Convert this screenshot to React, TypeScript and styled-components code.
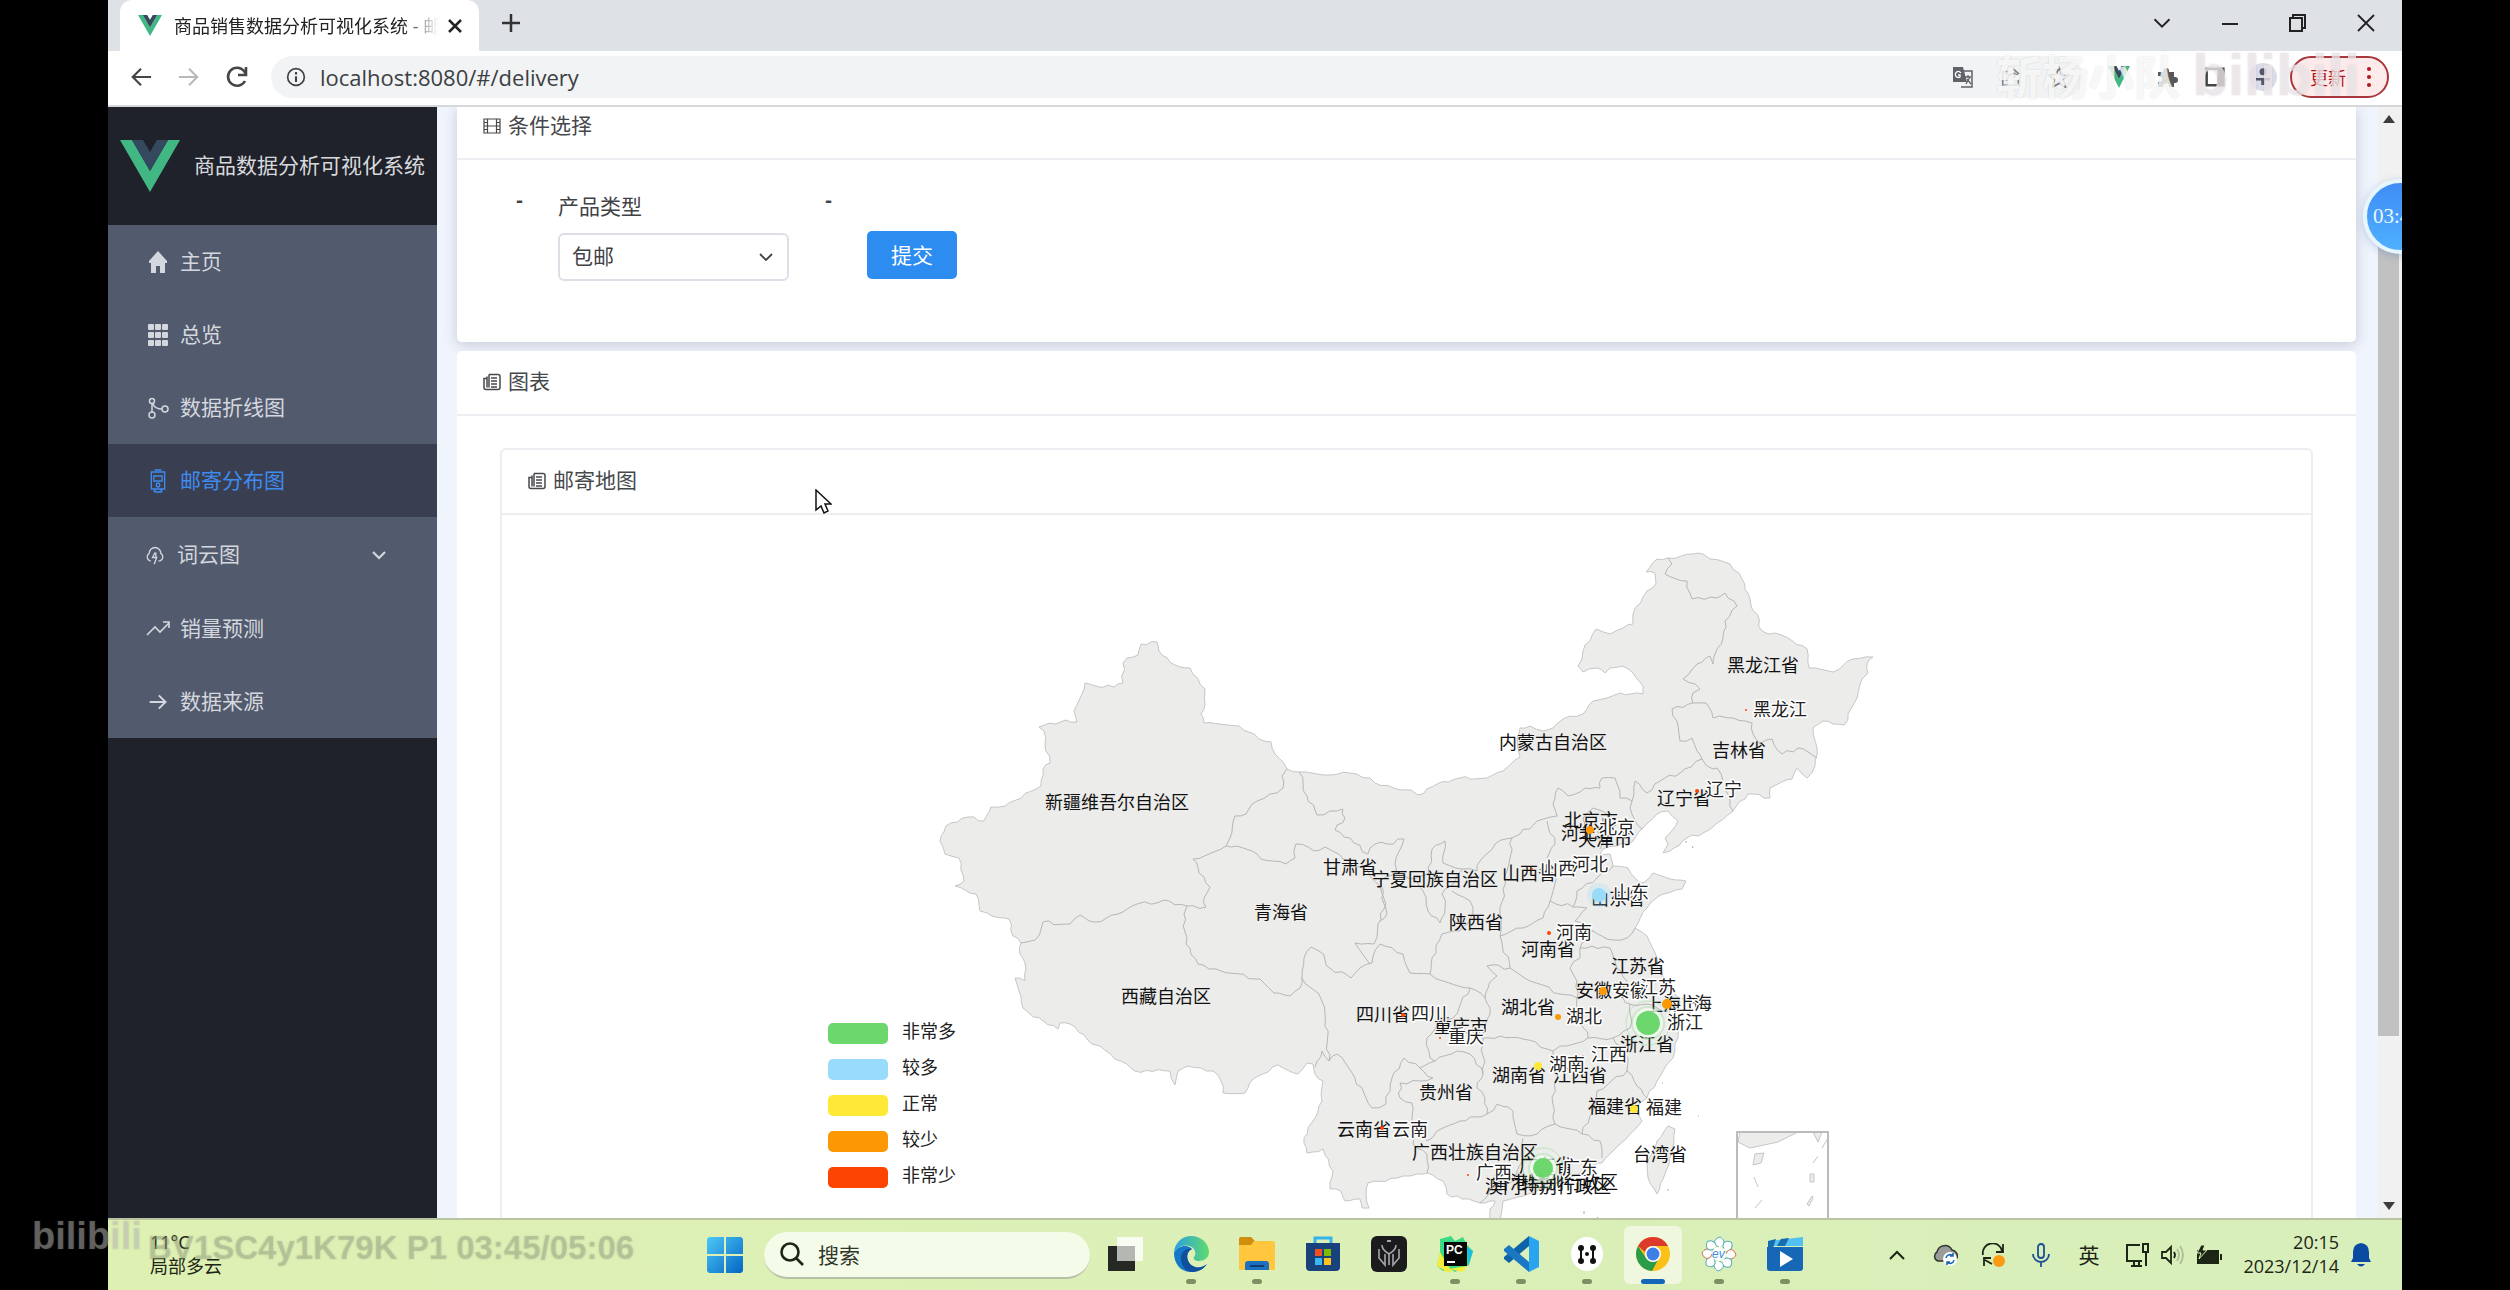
import React from "react";
import styled, { createGlobalStyle, css } from "styled-components";

const cjk = `"Noto Sans", "Noto Sans CJK SC", sans-serif`;
const han = `"Noto Sans CJK SC", sans-serif`;

const GlobalStyle = createGlobalStyle`
  *, *::before, *::after { box-sizing: border-box; }
  body { margin: 0; background: #000; font-family: ${han}; color: #404246; }
  button, select, input { font: inherit; color: inherit; }
  a { color: inherit; text-decoration: none; }
  svg { display: block; }
`;

/* ---------- frame ---------- */

const Stage = styled.div`
  position: relative;
  height: 100vh;
  padding: 0 108px;
  background: #000;
  overflow: hidden;
`;

const Desktop = styled.div`
  position: relative;
  height: 100%;
  display: flex;
  flex-direction: column;
  overflow: hidden;
  background: #fff;
`;

const IconButton = styled.button<{ $w?: number; $color?: string }>`
  flex: none;
  display: flex;
  align-items: center;
  justify-content: center;
  width: ${(p) => p.$w ?? 48}px;
  height: 42px;
  padding: 0;
  border: 0;
  background: none;
  color: ${(p) => p.$color ?? "#444746"};
`;

/* ---------- browser chrome ---------- */

const TabStrip = styled.div`
  flex: none;
  display: flex;
  height: 51px;
  padding: 2px 2px 0 12px;
  background: #dee1e6;
`;

const Tab = styled.div`
  display: flex;
  align-items: center;
  width: 359px;
  margin-top: -2px;
  padding: 0 8px 0 18px;
  border-radius: 12px 12px 0 0;
  background: #fff;
`;

const TabTitle = styled.span`
  flex: 1;
  margin-left: 12px;
  overflow: hidden;
  white-space: nowrap;
  font: 18px/28px ${cjk};
  color: #222;
  mask-image: linear-gradient(90deg, #000 86%, transparent 100%);
`;

const WindowButtons = styled.div`
  display: flex;
  margin-left: auto;
`;

const Toolbar = styled.div`
  flex: none;
  display: flex;
  align-items: center;
  height: 56px;
  padding: 0 13px 2px 9px;
  border-bottom: 2px solid #d5d7da;
  background: #fff;
`;

const AddressBar = styled.div`
  flex: 1;
  display: flex;
  align-items: center;
  height: 42px;
  margin: 0 12px 0 10px;
  padding-left: 15px;
  border-radius: 21px;
  background: #f1f3f4;
`;

const AddressInput = styled.input`
  flex: 1;
  min-width: 0;
  margin-left: 14px;
  padding: 0;
  border: 0;
  outline: 0;
  background: none;
  font: 22px/30px "Open Sans", sans-serif;
  color: #3c4043;
`;

const UpdateButton = styled.button`
  display: flex;
  align-items: center;
  justify-content: space-between;
  width: 99px;
  height: 42px;
  margin-left: 3px;
  padding: 0 16px 0 18px;
  border: 2px solid #a8383b;
  border-radius: 21px;
  background: #fdebeb;
  font: 18px/24px ${han};
  color: #b3191d;
`;

/* ---------- page ---------- */

const Viewport = styled.div`
  flex: 1;
  min-height: 0;
  display: grid;
  grid-template-columns: 329px 1fr 24px;
  overflow: hidden;
  background: #f0f4fd;
`;

const Sidebar = styled.nav`
  background: #1f222b;
`;

/* Text beside an icon sits slightly above the icon's centre line. */
const Caption = styled.span`
  padding-bottom: 4px;
  line-height: 30px;
`;

const Brand = styled.div`
  display: flex;
  align-items: center;
  gap: 14px;
  height: 118px;
  padding-left: 12px;
  white-space: nowrap;
  font-size: 21px;
  color: #d8d9dc;
`;

const Menu = styled.ul`
  margin: 0;
  padding: 0;
  list-style: none;
  background: #525a6e;
`;

const MenuLink = styled.a<{ $active?: boolean; $submenu?: boolean }>`
  display: flex;
  align-items: center;
  height: ${(p) => (p.$submenu ? 75 : 73)}px;
  padding: 0 50px 0 ${(p) => (p.$submenu ? 36 : 37)}px;
  font-size: 21px;
  color: #d4d7de;
  ${(p) => p.$active && css`background: #393e50; color: #3f8cf0;`}
`;

const MenuIcon = styled.span<{ $submenu?: boolean }>`
  display: flex;
  justify-content: center;
  width: ${(p) => (p.$submenu ? 22 : 26)}px;
  margin-right: ${(p) => (p.$submenu ? 11 : 9)}px;
`;

const MenuArrow = styled.span`
  margin-left: auto;
`;

const Main = styled.main`
  min-width: 0;
  padding: 0 22px 0 20px;
  overflow: hidden;
`;

const Card = styled.section<{ $raised?: boolean }>`
  background: #fff;
  border-radius: 0 0 5px 5px;
  ${(p) =>
    p.$raised
      ? css`box-shadow: 0 3px 14px rgba(50, 55, 75, 0.22);`
      : css`margin-top: 9px; border-radius: 5px 5px 0 0;`}
`;

const CardHeader = styled.h2<{ $short?: boolean }>`
  display: flex;
  align-items: center;
  gap: 7px;
  height: ${(p) => (p.$short ? 53 : 65)}px;
  margin: 0;
  padding: 0 26px ${(p) => (p.$short ? 14 : 2)}px;
  border-bottom: 2px solid #eceef1;
  font-size: 21px;
  font-weight: 400;
  color: #46484c;
`;

const Form = styled.form`
  display: flex;
  height: 182px;
  padding: 26px 59px;
`;

const Dash = styled.span<{ $w: number }>`
  width: ${(p) => p.$w}px;
  font: bold 21px/28px "Liberation Sans", sans-serif;
`;

const Field = styled.label`
  display: block;
  width: 231px;
  margin-right: 36px;
  padding-top: 4px;
  font-size: 21px;
  line-height: 30px;
`;

const SelectBox = styled.span`
  display: grid;
  align-items: center;
  margin-top: 13px;
  svg { grid-area: 1 / 1; justify-self: end; margin-right: 15px; pointer-events: none; }
`;

const Select = styled.select`
  grid-area: 1 / 1;
  width: 100%;
  height: 48px;
  padding: 0 12px 4px;
  appearance: none;
  border: 2px solid #dcdfe6;
  border-radius: 6px;
  background: #fff;
`;

const Submit = styled.button`
  width: 90px;
  height: 48px;
  margin-top: 45px;
  padding: 0 0 3px;
  border: 0;
  border-radius: 5px;
  background: #2d8cf0;
  font-size: 21px;
  color: #fff;
`;

const ChartBody = styled.div`
  padding: 32px 43px 44px;
`;

const ChartPanel = styled.section`
  border: 2px solid #eceef1;
  border-radius: 6px;
  svg.map { width: 100%; height: auto; }
`;

const ScrollTrack = styled.div`
  display: flex;
  flex-direction: column;
  align-items: center;
  justify-content: space-between;
  padding: 8px 3px 8px 0;
  background: #f1f1f1;
`;

const Thumb = styled.div`
  width: 21px;
  height: 77%;
  margin-bottom: auto;
  margin-top: 70px;
  background: #c1c1c1;
`;

/* ---------- taskbar ---------- */

const Taskbar = styled.footer`
  flex: none;
  display: flex;
  align-items: center;
  height: 72px;
  padding: 0 31px 0 42px;
  border-top: 2px solid #b9c4a1;
  background: linear-gradient(90deg, #dff0b3, #d8efbb);
  color: #1d2515;
`;

const Weather = styled.div`
  width: 549px;
  padding-bottom: 3px;
  font: 18px/24px ${cjk};
`;

const SearchBox = styled.label`
  display: flex;
  align-items: center;
  gap: 14px;
  width: 326px;
  height: 47px;
  margin: 0 2px 0 13px;
  padding-left: 16px;
  border-radius: 24px;
  border-bottom: 2px solid #b5c0a5;
  background: #f4fbe9;
  input {
    width: 200px;
    padding: 0;
    border: 0;
    outline: 0;
    background: none;
    font: 21px/30px ${han};
    &::placeholder { color: #30362a; opacity: 1; }
  }
`;

const Dock = styled.div`
  display: flex;
`;

const DockApp = styled.button<{ $state?: "open" | "active" }>`
  display: grid;
  grid-template-rows: 1fr 6px;
  justify-items: center;
  align-items: center;
  width: 58px;
  height: 58px;
  margin: 0 4px;
  padding: 4px 0 0;
  border: 0;
  border-radius: 6px;
  background: ${(p) => (p.$state === "active" ? "#eff7df" : "none")};
  &::after {
    content: "";
    width: ${(p) => (p.$state === "active" ? 24 : 10)}px;
    height: 5px;
    border-radius: 3px;
    background: ${(p) => (p.$state === "active" ? "#1467b8" : p.$state ? "#7d9064" : "none")};
  }
`;

const Tray = styled.div`
  display: flex;
  align-items: center;
  margin-left: auto;
`;

const Ime = styled.button`
  width: 48px;
  padding: 0 0 2px;
  border: 0;
  background: none;
  font: 21px/30px ${han};
  color: #1d2515;
`;

const Clock = styled.time`
  width: 106px;
  margin-right: 12px;
  padding-bottom: 2px;
  text-align: right;
  font: 18px/24px "Open Sans", sans-serif;
`;

/* ---------- overlays ---------- */

const RecorderBadge = styled.div`
  position: absolute;
  top: 179px;
  right: -36px;
  width: 75px;
  height: 75px;
  padding-left: 6px;
  border: 4px solid #e6f6ff;
  border-radius: 50%;
  background: linear-gradient(#3f8cf5, #4fb1ff);
  font: 21px/67px "Liberation Serif", serif;
  color: #eaf6ff;
  box-shadow: 0 2px 8px rgba(60, 110, 180, 0.3);
`;

const Pointer = styled.svg`
  position: absolute;
  top: 489px;
  left: 707px;
`;

const Mark = styled.div<{ $top: number; $left?: number; $right?: number; $size: number; $color: string }>`
  position: absolute;
  top: ${(p) => p.$top}px;
  ${(p) => (p.$left !== undefined ? `left: ${p.$left}px;` : `right: ${p.$right}px;`)}
  font: 700 ${(p) => p.$size}px/1 "Liberation Sans", "Noto Sans CJK SC", sans-serif;
  color: ${(p) => p.$color};
  text-shadow: 0 0 2px rgba(120, 120, 120, 0.25);
  white-space: nowrap;
  pointer-events: none;
`;

/* ---------- icons ---------- */

const Line = ({ w = 24, h, sw = 2, vb = 24, children }: { w?: number; h?: number; sw?: number; vb?: number; children: React.ReactNode }) => (
  <svg width={w} height={h ?? w} viewBox={`0 0 ${vb} ${vb}`} fill="none" stroke="currentColor" strokeWidth={sw} preserveAspectRatio="none" aria-hidden="true">
    {children}
  </svg>
);

const VueLogo = ({ w, h }: { w: number; h: number }) => (
  <svg width={w} height={h} viewBox="0 0 60 52" preserveAspectRatio="none" aria-hidden="true">
    <path d="M0 0h12l18 31L48 0h12L30 52z" fill="#41b883" />
    <path d="M12 0h11l7 12 7-12h11L30 31z" fill="#34495e" />
  </svg>
);

const Chevron = ({ w = 16, sw = 2 }: { w?: number; sw?: number }) => (
  <Line w={w} sw={sw} vb={16}><path d="M2 5l6 6 6-6" /></Line>
);

const NewsIcon = () => (
  <Line w={18} sw={1.5} vb={18}>
    <path d="M6 1.5h9q2 0 2 2v11q0 2-2 2H3q-2 0-2-2v-9h3M4 3.5v11M6 1.5v13M8 5h6M8 8h6M8 11h6M8 14h6" />
  </Line>
);

const FilmIcon = () => (
  <Line w={18} sw={1.2} vb={18}>
    <path d="M1 2h16v14H1zM4.500 2v14M13.500 2v14M4.500 9h9M1 5.500h3.500M1 9h3.500M1 12.500h3.500M13.500 5.500H17M13.500 9H17M13.500 12.500H17" />
  </Line>
);

const menu = [
  { label: "主页", icon: <svg width="20" height="22" viewBox="0 0 20 22" fill="currentColor"><path d="M10 0l9 10v2h-2v10h-5v-7H8v7H3V12H1v-2z" /></svg> },
  { label: "总览", icon: <svg width="20" height="22" viewBox="0 0 20 22" fill="currentColor">{[0, 7, 14].map((x) => [0, 8, 16].map((y) => <rect key={`${x}${y}`} x={x} y={y} width="6" height="6" rx="1" />))}</svg> },
  { label: "数据折线图", icon: <Line w={22} sw={1.5} vb={22}><circle cx="5" cy="4" r="2.500" /><circle cx="5" cy="18" r="3" /><circle cx="18" cy="12" r="3" /><path d="M5 7v8M6 7q2 5 9 5" /></Line> },
  { label: "邮寄分布图", active: true, icon: <Line w={20} h={24} sw={1.6}><path d="M8 1h8M4 3h16v17H4zM7 7h10v5H7zM8 23h8M9 20l-2 3M15 20l2 3" /><circle cx="12" cy="16" r="2" /></Line> },
  { label: "词云图", submenu: true, icon: <Line w={20} sw={1.6}><path d="M7 19H6a5 5 0 01-1-9 7 7 0 0114 0 5 5 0 01-1 9h-2M12 9l-3 6h5l-3 8M13 9v5" /></Line> },
  { label: "销量预测", icon: <Line w={24} sw={1.6}><path d="M1 18l8-8 5 5 9-9M17 5h6v6" /></Line> },
  { label: "数据来源", icon: <Line w={20} sw={2.4}><path d="M2 12h19M13 4l8 8-8 8" /></Line> },
];

/* ---------- map ---------- */

type Pt = [number, number];
const parse = (s: string): Pt[] => s.trim().split(/\s+/).map((p) => p.split(",").map(Number) as Pt);

/* Breaks straight runs into short uneven steps, so that borders look surveyed. */
const rough = (s: string, amp: number, close = false) => {
  const pts = parse(s);
  if (close) pts.push(pts[0]);
  let d = `M${pts[0].join(" ")}`;
  for (let i = 1; i < pts.length; i++) {
    const [x0, y0] = pts[i - 1];
    const [x1, y1] = pts[i];
    const len = Math.hypot(x1 - x0, y1 - y0);
    const n = Math.max(1, Math.round(len / 6));
    for (let k = 1; k < n; k++) {
      const t = k / n;
      const r = (Math.abs(Math.sin(x0 * 12.9 + y1 * 78.2 + k * 37.7) * 43758) % 1) * 2 - 1;
      d += `L${(x0 + (x1 - x0) * t - ((y1 - y0) / len) * r * amp).toFixed(1)} ${(y0 + (y1 - y0) * t + ((x1 - x0) / len) * r * amp).toFixed(1)}`;
    }
    d += `L${x1} ${y1}`;
  }
  return close ? d + "Z" : d;
};

const outline = `1141,643 1157,641 1159,650 1175,664 1190,667 1205,688 1205,703 1201,713 1204,722 1239,725 1264,740 1271,741 1275,753 1287,768 1299,771 1330,774 1350,772 1370,777 1375,782 1400,789 1411,789 1418,794 1437,783 1460,777 1487,777 1503,770 1520,756 1517,737 1520,727 1530,725 1543,730 1553,727 1563,718 1583,713 1593,700 1607,697 1620,692 1643,693 1643,685 1633,672 1622,665 1610,667 1605,672 1597,667 1583,671 1578,665 1582,658 1583,650 1596,628 1610,633 1623,627 1633,623 1633,613 1647,590 1656,583 1655,572 1646,571 1657,558 1668,557 1693,553 1703,553 1710,558 1730,563 1742,578 1750,598 1762,630 1788,637 1807,648 1809,667 1833,671 1853,658 1873,656 1867,663 1868,672 1862,678 1857,697 1844,724 1823,720 1813,727 1817,747 1815,765 1807,777 1797,767 1792,778 1770,787 1770,797 1748,793 1733,810 1717,822 1703,832 1687,837 1670,850 1663,852 1668,843 1665,837 1678,820 1668,810 1657,813 1642,828 1633,840 1617,845 1603,848 1600,853 1610,853 1613,865 1628,867 1635,877 1643,882 1653,872 1670,878 1686,880 1682,888 1663,893 1647,907 1635,927 1647,935 1657,957 1665,980 1675,993 1680,1002 1668,1013 1677,1023 1678,1037 1673,1057 1663,1070 1657,1080 1647,1097 1637,1105 1642,1120 1630,1133 1613,1150 1602,1162 1593,1165 1567,1180 1540,1188 1523,1195 1503,1200 1502,1208 1500,1230 1488,1230 1490,1208 1495,1200 1480,1202 1462,1198 1447,1193 1443,1180 1427,1172 1417,1173 1397,1177 1368,1182 1366,1193 1369,1207 1362,1207 1360,1198 1345,1200 1341,1190 1330,1188 1333,1170 1323,1148 1307,1152 1304,1137 1315,1117 1322,1100 1323,1080 1315,1073 1313,1063 1307,1062 1298,1073 1278,1064 1253,1078 1245,1092 1223,1092 1221,1080 1213,1070 1188,1065 1178,1070 1175,1084 1170,1070 1135,1070 1127,1063 1115,1058 1100,1045 1092,1043 1070,1023 1060,1022 1058,1028 1029,1012 1023,1007 1019,990 1015,977 1025,980 1026,967 1020,953 1021,942 1013,935 1009,918 992,915 980,910 976,893 955,885 964,880 959,857 945,853 940,840 946,825 968,816 984,820 991,806 1005,805 1041,785 1043,768 1050,762 1045,743 1044,730 1039,726 1066,719 1077,721 1074,710 1085,682 1096,685 1114,686 1123,682 1123,662 1127,657 1138,654`;

const taiwan = `1668,1125 1675,1128 1673,1147 1665,1173 1657,1193 1648,1177 1647,1163 1657,1140`;

const borders = [
  `1287,768 1282,775 1283,787 1270,793 1257,800 1246,813 1235,815 1230,837 1226,845 1193,858 1199,872 1210,886 1204,897 1206,906 1187,905 1164,899 1132,905 1118,913 1094,921 1080,914 1070,923 1043,921 1035,939 1021,942`,
  `1299,771 1307,795 1317,814 1343,808 1345,817 1335,829 1354,842 1368,853 1375,843 1387,843 1404,838 1395,863 1396,873 1414,878 1429,873 1432,848 1445,840 1443,862 1463,868 1477,870 1480,860 1495,843 1512,837 1520,833 1537,820 1557,815 1553,803 1558,787 1568,795 1585,787 1600,787 1602,777 1615,777 1620,797 1632,800 1635,780 1647,792 1660,780 1680,772 1702,758 1697,750 1692,737 1680,740 1677,720 1672,708 1693,702 1693,692 1700,688 1683,678 1697,663 1710,655 1713,663 1715,653 1723,637 1725,620 1737,605 1725,592 1717,597 1692,598 1687,580 1665,573 1672,563 1668,557`,
  `1693,702 1706,702 1713,717 1733,717 1752,722 1753,733 1760,743 1772,738 1782,753 1798,747 1817,757`,
  `1702,758 1713,768 1717,767 1723,780 1730,800 1733,810`,
  `1632,800 1630,807 1642,828`,
  `1226,845 1237,845 1257,853 1261,858 1286,863 1295,857 1296,843 1314,850 1325,846 1343,858 1368,870 1380,885 1386,903 1378,923 1374,943 1355,942 1370,963`,
  `1187,905 1184,913 1186,943 1198,963 1221,970 1260,978 1274,992 1290,995 1300,987 1302,977 1304,957 1311,946 1319,950 1331,968 1351,977 1360,967 1372,962 1380,943 1403,953 1410,972 1430,973 1443,980 1470,987 1485,997`,
  `1302,977 1319,993 1325,1013 1329,1060 1337,1053 1355,1077 1372,1107 1386,1103 1392,1077 1404,1057 1420,1067 1433,1077 1420,1080 1400,1082 1400,1097 1412,1102 1412,1120 1427,1140 1443,1127 1460,1120 1487,1113 1497,1103 1513,1110 1517,1133 1537,1133 1555,1123 1553,1103 1557,1077 1553,1050`,
  `1329,1060 1322,1050 1315,1066`,
  `1420,1067 1435,1060 1457,1050 1470,1053 1483,1073 1477,1087 1485,1097 1487,1113`,
  `1483,1073 1483,1037 1500,1035 1523,1038 1553,1050 1560,1045 1588,1037 1613,1037 1630,1027 1630,1003 1623,997 1627,980 1617,967 1610,947 1580,947`,
  `1487,965 1510,967 1530,980 1560,993 1577,997 1577,1010 1588,1037`,
  `1487,965 1497,975 1488,987 1485,997 1490,1013 1483,1037`,
  `1470,987 1453,1017 1440,1020 1427,1037 1430,1057 1435,1060`,
  `1430,973 1432,957 1442,933 1460,930 1473,913 1470,900 1452,890`,
  `1396,873 1380,880 1387,913 1380,920`,
  `1414,878 1423,890 1428,910 1440,922 1445,907 1442,893 1455,880 1463,868`,
  `1512,837 1507,870 1500,913 1500,935 1510,967`,
  `1500,935 1523,927 1543,917 1550,900 1557,873 1547,857 1555,843 1547,820`,
  `1550,900 1573,906 1577,890 1597,877 1613,865`,
  `1573,906 1587,907 1575,920 1593,930 1607,938 1627,937 1635,927`,
  `1593,930 1580,947 1580,957 1570,967 1577,980 1577,997`,
  `1613,1037 1628,1057 1627,1070 1637,1085 1647,1097`,
  `1627,1070 1597,1090 1593,1110 1582,1133 1600,1140 1602,1157`,
  `1555,1123 1582,1133`,
  `1523,1137 1523,1160 1513,1180 1490,1188 1480,1202`,
  `1412,1120 1413,1143 1427,1153 1427,1172`,
  `1630,1003 1647,1003 1668,1010`,
  `1583,817 1593,807 1607,813 1610,830 1598,838 1583,830 1583,817`,
  `1604,840 1600,848`,
];

const provinces: [string, number, number][] = [
  ["新疆维吾尔自治区", 1117, 800], ["黑龙江省", 1763, 663], ["内蒙古自治区", 1553, 740], ["吉林省", 1739, 748],
  ["辽宁省", 1684, 796], ["北京市", 1591, 818], ["河北省", 1588, 831], ["天津市", 1605, 837],
  ["甘肃省", 1350, 865], ["宁夏回族自治区", 1435, 877], ["山西省", 1529, 871], ["青海省", 1281, 910],
  ["山东省", 1618, 896], ["陕西省", 1476, 920], ["河南省", 1548, 947], ["江苏省", 1638, 964],
  ["安徽省", 1603, 988], ["上海市", 1672, 1002], ["浙江省", 1647, 1042], ["湖北省", 1528, 1005],
  ["湖南省", 1519, 1073], ["江西省", 1580, 1073], ["贵州省", 1446, 1090], ["福建省", 1615, 1104],
  ["四川省", 1383, 1012], ["重庆市", 1461, 1024], ["云南省", 1364, 1127], ["西藏自治区", 1166, 994],
  ["广西壮族自治区", 1475, 1150], ["广东省", 1546, 1163], ["台湾省", 1660, 1152],
  ["澳门特别行政区", 1548, 1184], ["香港特别行政区", 1555, 1180],
];

const GREEN = "#6bd76d", BLUE = "#99dbfa", YELLOW = "#ffe936", ORANGE = "#fc9803", RED = "#fd4402";

/* name, label x/y, dot x/y, radius, colour */
const cities: [string, number, number, number, number, number, string][] = [
  ["黑龙江", 1753, 707, 1746, 709, 1, RED], ["辽宁", 1706, 787, 1697, 790, 2, RED],
  ["山西", 1540, 866, 1532, 868, 1, RED], ["河北", 1572, 862, 1566, 864, 0, RED],
  ["北京", 1599, 825, 1590, 829, 4, ORANGE], ["山东", 1613, 890, 1599, 894, 7, BLUE],
  ["河南", 1556, 930, 1549, 932, 2, RED], ["安徽", 1612, 988, 1603, 990, 4, ORANGE],
  ["江苏", 1640, 985, 1630, 980, 0, RED], ["上海", 1676, 1001, 1667, 1003, 5, ORANGE],
  ["浙江", 1667, 1020, 1648, 1022, 12, GREEN], ["湖北", 1566, 1014, 1558, 1016, 3, ORANGE],
  ["四川", 1411, 1011, 1403, 1014, 2, RED], ["重庆", 1448, 1034, 1440, 1037, 1, RED],
  ["江西", 1591, 1052, 1583, 1055, 1, RED], ["湖南", 1549, 1062, 1538, 1065, 4, YELLOW],
  ["福建", 1646, 1105, 1634, 1108, 4, YELLOW], ["云南", 1392, 1127, 1382, 1127, 2, RED],
  ["广西", 1476, 1170, 1468, 1174, 1, RED], ["广东", 1562, 1165, 1543, 1167, 10, GREEN],
];

const legend: [string, string][] = [["非常多", GREEN], ["较多", BLUE], ["正常", YELLOW], ["较少", ORANGE], ["非常少", RED]];

const ChinaMap = () => (
  <svg className="map" viewBox="502 514 1809 760" role="img" aria-label="邮寄地图" fontFamily={han} fontSize="18" dominantBaseline="central">
    <g fill="#ececeb" stroke="#c6c6c6" strokeLinejoin="round">
      <path d={rough(outline, 1.5, true)} />
      <path d={rough(taiwan, 1, true)} />
      <path d="M1740 1131h58l-20 10-28 6-12-6zM1813 1131h9l-4 10z" />
      <g fill="none" stroke="#b6b6b6">{borders.map((b) => <path key={b} d={rough(b, 2)} />)}</g>
      <path d="M1755 1153l9-1-3 10-8 2zM1754 1176l4 10M1755 1207l7-8M1813 1162l5-7M1810 1173h4v8h-4zM1807 1203l5-8 1 2-4 8zM1822 1147l6-10" />
      <path d="M1737 1231v-100h91v100" fill="none" stroke="#bbb" strokeWidth="2" />
      <path d="M1584 1210v3M1597 1216l2 2M1668 1188v2M1685 841h2M1692 845l1 2M1662 1082h1M1698 1115h1" stroke="#aaa" />
    </g>
    <g fill="#111" textAnchor="middle">
      {provinces.map(([n, x, y]) => <text key={n} x={x} y={y}>{n}</text>)}
    </g>
    {cities.map(([n, lx, ly, x, y, r, c]) => (
      <g key={n}>
        {r > 5 && <circle cx={x} cy={y} r={r + 5} fill={c} opacity="0.25" />}
        {r > 9 && <circle cx={x} cy={y} r={r + 3} fill="#fff" opacity="0.7" />}
        {r > 9 && <circle cx={x} cy={y} r={r + 10} fill="none" stroke={c} opacity="0.35" />}
        <circle cx={x} cy={y} r={r} fill={c} />
        <text x={lx} y={ly} fill="#222" stroke="#fff" strokeWidth="3" strokeLinejoin="round" paintOrder="stroke">{n}</text>
      </g>
    ))}
    {legend.map(([n, c], i) => (
      <g key={n}>
        <rect x="828" y={1022 + i * 36} width="60" height="21" rx="5" fill={c} />
        <text x="902" y={1029 + i * 36} fill="#222">{n}</text>
      </g>
    ))}
  </svg>
);

/* ---------- taskbar artwork ---------- */

const art = (children: React.ReactNode) => <svg width="36" height="36" viewBox="0 0 36 36" aria-hidden="true">{children}</svg>;

const apps: { name: string; state?: "open" | "active"; icon: React.ReactNode }[] = [
  { name: "任务视图", icon: art(<><path d="M1 10h27v25H1z" fill="#262823" /><path d="M10 1h26v24H10z" fill="#fff" opacity=".8" /><path d="M10 10h18v15H10z" fill="#b5b7b3" /></>) },
  { name: "Edge", state: "open", icon: art(<>
    <defs><linearGradient id="e1"><stop stopColor="#2b9fe4" /><stop offset="1" stopColor="#5fdc6c" /></linearGradient></defs>
    <path d="M1 18C1 7 9 0 18 0c11 0 18 8 18 16 0 6-5 9-10 9-4 0-6-2-5-4 2-2 2-6-1-9C13 7 4 10 1 18z" fill="url(#e1)" />
    <path d="M1 17c4-8 14-9 18-4-6 2-6 10-2 15 5 5 12 4 17 0-4 6-10 8-16 8C8 36 1 28 1 17z" fill="#1577c8" />
    <path d="M8 22c0-6 5-10 11-9-6 3-6 10-2 15 5 5 12 4 17 0-4 6-10 8-16 8-6-1-10-7-10-14z" fill="#0f4f9c" /></>) },
  { name: "文件资源管理器", state: "open", icon: art(<><path d="M0 3q0-2 2-2h10l4 4-4 5H0z" fill="#d08e0d" /><path d="M0 9h12l3-4h19q2 0 2 2v27H0z" fill="#ffc63e" /><path d="M6 34v-6q0-3 3-3h18q3 0 3 3v6z" fill="#1d6fc0" /><path d="M11 30h14" stroke="#0d3c73" strokeWidth="2" /></>) },
  { name: "Microsoft Store", icon: art(<><path d="M10 8V2h16v6" fill="none" stroke="#35b3ea" strokeWidth="3" /><path d="M1 7h34v24q0 4-4 4H5q-4 0-4-4z" fill="#17427b" /><path d="M10 13h7v7h-7z" fill="#f25022" /><path d="M19 13h7v7h-7z" fill="#7fba00" /><path d="M10 22h7v7h-7z" fill="#3cb5f0" /><path d="M19 22h7v7h-7z" fill="#ffc11c" /></>) },
  { name: "Legion", icon: art(<><rect width="36" height="36" rx="6" fill="#1b1b1e" /><path d="M11 9q0 5 7 9 7-4 7-9M18 18v11M8 13v9l6 7V18M28 13v9l-6 7V18" fill="none" stroke="#a5a7ab" strokeWidth="1.600" /><path d="M16 5h4" stroke="#a5a7ab" strokeWidth="2" /></>) },
  { name: "PyCharm", state: "open", icon: art(<><path d="M3 3L14 0l4 5 8-4 4 8 6 6-4 14-14 7-6-4-6 3L0 30l3-12z" fill="#3ddc84" /><path d="M0 30l3-14 12 20-5 0zM12 33l18-3-4 6z" fill="#f5ed3c" /><path d="M30 11l6 4-5 15z" fill="#18c0e0" /><path d="M7 6h23v24H7z" fill="#080808" /><text x="9" y="18" fontFamily="Liberation Sans" fontWeight="700" fontSize="12" fill="#fff">PC</text><path d="M10 26h8" stroke="#fff" strokeWidth="2" /></>) },
  { name: "VS Code", state: "open", icon: art(<><path d="M26 0v10L6 27l-5-4v-2z" fill="#0f63a9" /><path d="M1 13l5-4 20 17v10L1 15z" fill="#1a78c2" /><path d="M26 0l10 5v26l-10 5z" fill="#2aa4ee" /></>) },
  { name: "H", state: "open", icon: art(<><ellipse cx="18" cy="18" rx="16" ry="17" fill="#fff" /><path d="M12 11v14M24 11v14" stroke="#111" strokeWidth="2" /><g fill="#111"><circle cx="12" cy="12" r="3" /><circle cx="24" cy="12" r="3" /><circle cx="12" cy="25" r="3" /><circle cx="24" cy="25" r="3" /><circle cx="18" cy="18" r="2" /></g></>) },
  { name: "Chrome", state: "active", icon: art(<><circle cx="18" cy="18" r="17" fill="#fbc116" /><path d="M3 10a17 17 0 0130 0H18a8 8 0 00-8 6z" fill="#dd3a2e" /><path d="M3 10A17 17 0 0017 35l7-13a8 8 0 01-13 0z" fill="#2b9d4a" /><circle cx="18" cy="18" r="8" fill="#fff" /><circle cx="18" cy="18" r="6.500" fill="#3d7fe6" /></>) },
  { name: "EV", state: "open", icon: art(<><g fill="#fff">{[0, 45, 90, 135, 180, 225, 270, 315].map((a) => <path key={a} transform={`rotate(${a} 18 18)`} d="M18 11c-6-2-6-8 1-10 4 2 5 6 3 9" stroke={a === 90 || a === 270 ? "#c8714d" : "#55aeb4"} />)}</g><circle cx="18" cy="18" r="7" fill="#fff" /><text x="11" y="22" fontFamily="Liberation Sans" fontStyle="italic" fontSize="12" fill="#3a8fd8">ev</text></>) },
  { name: "影片", state: "open", icon: art(<><path d="M2 5l34-4v9H2z" fill="#52c0f0" /><path d="M1 5l8-2-3 9H1zM14 3l8-1-4 8h-8z" fill="#176cae" /><path d="M0 11h36v21q0 3-3 3H3q-3 0-3-3z" fill="#1668b6" /><path d="M13 15l13 8-13 8z" fill="#fff" /></>) },
];

export default function App() {
  return (
    <Stage>
      <GlobalStyle />
      <Desktop>
        <TabStrip>
          <Tab>
            <VueLogo w={24} h={21} />
            <TabTitle>商品销售数据分析可视化系统 - 邮寄分布图</TabTitle>
            <IconButton $w={32} aria-label="关闭标签页" $color="#222"><Line w={14} sw={2.5} vb={14}><path d="M1 1l12 12M13 1L1 13" /></Line></IconButton>
          </Tab>
          <IconButton $w={64} aria-label="新标签页" $color="#333"><Line w={18} sw={2.5} vb={18}><path d="M9 0v18M0 9h18" /></Line></IconButton>
          <WindowButtons>
            <IconButton $w={68} aria-label="搜索标签页" $color="#222"><Chevron w={20} sw={1.5} /></IconButton>
            <IconButton $w={68} aria-label="最小化" $color="#222"><Line w={16} sw={2} vb={16}><path d="M0 9h16" /></Line></IconButton>
            <IconButton $w={68} aria-label="还原" $color="#222"><Line w={18} sw={2} vb={18}><path d="M1 4h12v13H1zM4 4V1h12v13h-3" /></Line></IconButton>
            <IconButton $w={68} aria-label="关闭" $color="#222"><Line w={18} sw={1.8} vb={18}><path d="M1 1l16 16M17 1L1 17" /></Line></IconButton>
          </WindowButtons>
        </TabStrip>
        <Toolbar>
          <IconButton aria-label="后退"><Line w={22} sw={2.4}><path d="M23 12H3M12 3l-9 9 9 9" /></Line></IconButton>
          <IconButton aria-label="前进" $color="#b6b8ba"><Line w={22} sw={2.2}><path d="M1 12h20M12 3l9 9-9 9" /></Line></IconButton>
          <IconButton aria-label="重新加载"><Line w={24} sw={2.6}><path d="M20 16a9 9 0 11-1-10l2 3M21 2v8h-8" /></Line></IconButton>
          <AddressBar>
            <Line w={20} sw={2}><circle cx="12" cy="12" r="10" /><path d="M12 11v7M12 6v3" strokeWidth="2.500" /></Line>
            <AddressInput aria-label="地址" defaultValue="localhost:8080/#/delivery" />
            <IconButton aria-label="翻译"><svg width="22" height="22" viewBox="0 0 22 22"><path d="M9 5h11v16H9" fill="none" stroke="#5f6368" strokeWidth="1.500" /><path d="M1 1h10l4 15H1z" fill="#5f6368" /><path d="M9 7a3 3 0 10-1 4V9H6" fill="none" stroke="#fff" strokeWidth="1.300" /><path d="M13 11h6M16 9v2M18 11l-4 7M15 13l4 5" fill="none" stroke="#5f6368" strokeWidth="1.300" /></svg></IconButton>
            <IconButton aria-label="分享" $color="#85898c"><Line w={22} sw={1.8}><path d="M8 6H3v15h17v-6M7 16q1-8 10-8M14 3l6 5-6 5" /></Line></IconButton>
            <IconButton aria-label="收藏" $color="#777b7e"><Line w={22} sw={1.8}><path d="M12 2l3 7 8 1-6 5 2 8-7-4-7 4 2-8-6-5 8-1z" /></Line></IconButton>
          </AddressBar>
          <IconButton aria-label="Vue.js devtools"><VueLogo w={22} h={22} /></IconButton>
          <IconButton aria-label="扩展程序"><svg width="22" height="22" viewBox="0 0 22 22" fill="#55595d"><path d="M2 6h5V5a3 3 0 016 0v1h5v5h1a3 3 0 010 6h-1v4h-5v-1a3 3 0 00-6 0v1H2v-5h1a3 3 0 000-6H2z" /></svg></IconButton>
          <IconButton aria-label="侧边栏"><Line w={20} sw={2}><path d="M2 2h20v20H2z" strokeWidth="3" /><path d="M18 2v20" strokeWidth="6" /></Line></IconButton>
          <IconButton aria-label="个人资料"><svg width="28" height="32" viewBox="0 0 32 32"><circle cx="16" cy="16" r="16" fill="#dadde8" /><circle cx="16" cy="10" r="4" fill="#51566c" /><path d="M8 17h16v3h-6v5h-4v-5H8z" fill="#51566c" /></svg></IconButton>
          <UpdateButton>更新<svg width="4" height="22" viewBox="0 0 4 22" fill="#b3191d"><circle cx="2" cy="3" r="2" /><circle cx="2" cy="11" r="2" /><circle cx="2" cy="19" r="2" /></svg></UpdateButton>
        </Toolbar>

        <Viewport>
          <Sidebar>
            <Brand><VueLogo w={60} h={52} /><Caption>商品数据分析可视化系统</Caption></Brand>
            <Menu>
              {menu.map((m) => (
                <li key={m.label}>
                  <MenuLink href="#/delivery" $active={m.active} $submenu={m.submenu}>
                    <MenuIcon $submenu={m.submenu}>{m.icon}</MenuIcon>
                    <Caption>{m.label}</Caption>
                    {m.submenu && <MenuArrow><Chevron w={16} sw={2.2} /></MenuArrow>}
                  </MenuLink>
                </li>
              ))}
            </Menu>
          </Sidebar>
          <Main>
            <Card $raised>
              <CardHeader $short><FilmIcon /><Caption>条件选择</Caption></CardHeader>
              <Form onSubmit={(e) => e.preventDefault()}>
                <Dash $w={42}>-</Dash>
                <Field>
                  产品类型
                  <SelectBox>
                    <Select defaultValue="包邮"><option>包邮</option></Select>
                    <Chevron w={16} sw={1.8} />
                  </SelectBox>
                </Field>
                <Dash $w={42}>-</Dash>
                <Submit>提交</Submit>
              </Form>
            </Card>
            <Card>
              <CardHeader><NewsIcon /><Caption>图表</Caption></CardHeader>
              <ChartBody>
                <ChartPanel>
                  <CardHeader as="h3"><NewsIcon /><Caption>邮寄地图</Caption></CardHeader>
                  <ChinaMap />
                </ChartPanel>
              </ChartBody>
            </Card>
          </Main>
          <ScrollTrack>
            <svg width="12" height="8" viewBox="0 0 12 8" fill="#3c3c3c"><path d="M6 0l6 8H0z" /></svg>
            <Thumb />
            <svg width="12" height="8" viewBox="0 0 12 8" fill="#3c3c3c"><path d="M6 8L0 0h12z" /></svg>
          </ScrollTrack>
        </Viewport>

        <Taskbar>
          <Weather>11°C<br />局部多云</Weather>
          <IconButton $w={52} aria-label="开始"><svg width="36" height="36" viewBox="0 0 36 36"><defs><linearGradient id="win" x2="1" y2="1"><stop stopColor="#4cc8f7" /><stop offset="1" stopColor="#0465c4" /></linearGradient></defs><path d="M2 0h15v17H0V2zM19 0h15l2 2v15H19zM0 19h17v17H2l-2-2zM19 19h17v15l-2 2H19z" fill="url(#win)" /></svg></IconButton>
          <SearchBox>
            <Line w={24} sw={2.6}><circle cx="10" cy="10" r="8.500" /><path d="M16 16l7 7" /></Line>
            <input aria-label="搜索" placeholder="搜索" />
          </SearchBox>
          <Dock>
            {apps.map((a) => <DockApp key={a.name} $state={a.state} aria-label={a.name}>{a.icon}</DockApp>)}
          </Dock>
          <Tray>
            <IconButton aria-label="显示隐藏的图标" $color="#1d2515"><Line w={16} sw={2} vb={16}><path d="M1 12l7-7 7 7" /></Line></IconButton>
            <IconButton aria-label="云同步"><svg width="26" height="24" viewBox="0 0 26 24"><path d="M6 18a5 5 0 01-1-9 8 8 0 0115-2 6 6 0 015 8l-4 3z" fill="#9a9c99" stroke="#33362f" strokeWidth="1.500" /><circle cx="18" cy="16" r="7" fill="#fff" /><path d="M14 15a4 4 0 017-2M22 17a4 4 0 01-7 2M21 10v3h-3M15 22v-3h3" fill="none" stroke="#1c66b0" strokeWidth="1.600" /></svg></IconButton>
            <IconButton aria-label="更新" $color="#1d2515"><Line w={24} sw={1.8}><path d="M2 12a9 9 0 0119-4M22 1v8h-7M11 21l-7-4M3 23v-8h7" /><circle cx="18" cy="18" r="6" fill="#fb9a13" stroke="none" /></Line></IconButton>
            <IconButton aria-label="麦克风" $color="#1c4f93"><Line w={24} sw={1.8}><rect x="9" y="1" width="6" height="14" rx="3" /><path d="M4 11a8 8 0 0016 0M12 19v5" /></Line></IconButton>
            <Ime>英</Ime>
            <IconButton aria-label="网络" $color="#1d2515"><Line w={24} sw={2}><path d="M15 2H2v16h15M6 23h11M9 18v5M14 18v5M21 9v14M18 1h5v8h-5z" /></Line></IconButton>
            <IconButton $w={24} aria-label="音量" $color="#1d2515"><Line w={24} sw={1.8}><path d="M1 9v6h4l5 5V4L5 9zM13 9q2 3 0 6" /><path d="M16 6q4 6 0 12M19 3q6 9 0 18" stroke="#aebb98" /></Line></IconButton>
            <IconButton aria-label="电池" $color="#1d2515"><svg width="26" height="20" viewBox="0 0 26 20"><path d="M2 6h20v12H2z" fill="#1d2515" stroke="#1d2515" strokeWidth="2" /><path d="M24 9h2v6h-2z" fill="#1d2515" /><path d="M5 0L1 8h4l-2 6 8-9H7l2-5z" fill="#1d2515" stroke="#d9efba" /></svg></IconButton>
            <Clock>20:15<br />2023/12/14</Clock>
            <svg width="20" height="24" viewBox="0 0 20 24" fill="#0a4aa3"><path d="M10 0q8 1 8 9v6l2 4H0l2-4V9q0-8 8-9zM6 21h8q-4 5-8 0z" /></svg>
          </Tray>
        </Taskbar>

        <RecorderBadge>03:45</RecorderBadge>
        <Pointer width="17" height="26" viewBox="0 0 17 26" fill="#fff" stroke="#111" strokeWidth="1.500"><path d="M1 1v20l5-4 3 7 4-2-3-7h6z" /></Pointer>
      </Desktop>

      <Mark $top={55} $right={330} $size={46} $color="rgba(255,255,255,0.8)">斩杨小队</Mark>
      <Mark $top={46} $right={150} $size={58} $color="rgba(240,234,238,0.75)">bilibili</Mark>
      <Mark $top={1217} $left={32} $size={38} $color="rgba(200,200,195,0.42)">bilibili</Mark>
      <Mark $top={1231} $left={148} $size={33} $color="rgba(150,165,125,0.38)">BV1SC4y1K79K P1 03:45/05:06</Mark>
    </Stage>
  );
}
